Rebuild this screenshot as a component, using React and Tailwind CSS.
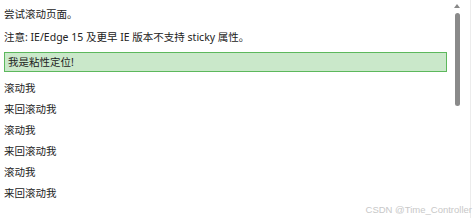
export default function App() {
  const rows = ['滚动我', '来回滚动我', '滚动我', '来回滚动我', '滚动我', '来回滚动我'];

  return (
    <div
      className="relative flex h-[218px] w-[474px] overflow-hidden bg-white text-[10.5px] text-[#222]"
      style={{ fontFamily: '"Noto Sans", "Noto Sans CJK SC", sans-serif' }}
    >
      <div className="w-[449px] pl-[4px] pr-[2px]">
        <p className="mt-[8px] leading-[13px]">尝试滚动页面。</p>
        <p className="mt-[10px] leading-[13px]">注意: IE/Edge 15 及更早 IE 版本不支持 sticky 属性。</p>
        <div className="mt-[8px] h-[20px] border border-[#5cb85c] bg-[#cae8ca] px-[3px] leading-[18px]">
          我是粘性定位!
        </div>
        <div className="mt-[10px] flex flex-col gap-[8px]">
          {rows.map((r, i) => (
            <p key={i} className="leading-[13px]">{r}</p>
          ))}
        </div>
      </div>

      {/* scrollbar */}
      <div className="flex w-[22px] border-r border-[#ececec]">
        <div className="flex w-[16px] flex-col items-center">
          <div className="mt-[4px] h-0 w-0 border-x-[3px] border-b-[4px] border-x-transparent border-b-[#888]" />
          <div className="mt-[5px] h-[93px] w-[5px] rounded-full bg-[#8a8a8a]" />
        </div>
      </div>

      <div
        className="absolute bottom-[1px] right-[2px] text-[9.5px] text-[#c8c8c8]"
        style={{ fontFamily: '"Liberation Sans", sans-serif' }}
      >
        CSDN @Time_Controller
      </div>
    </div>
  );
}
